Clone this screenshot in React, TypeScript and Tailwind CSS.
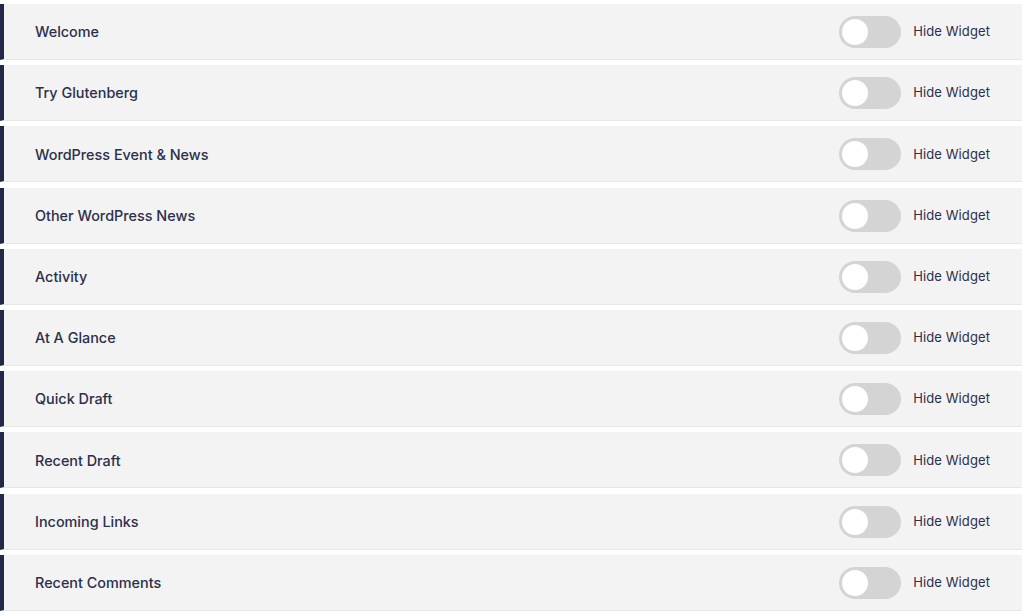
const widgets = [
  'Welcome',
  'Try Glutenberg',
  'WordPress Event & News',
  'Other WordPress News',
  'Activity',
  'At A Glance',
  'Quick Draft',
  'Recent Draft',
  'Incoming Links',
  'Recent Comments',
];

function Toggle() {
  return (
    <button type="button" className="relative h-[32px] w-[62px] rounded-full bg-[#d4d4d4] shrink-0">
      <span className="absolute left-[3px] top-[3px] h-[26px] w-[26px] rounded-full bg-white" />
    </button>
  );
}

export default function App() {
  return (
    <div className="min-h-[616px] bg-white pt-[4px] pr-[2px] font-['Inter','Liberation_Sans',sans-serif]">
      {widgets.map((name) => (
        <div
          key={name}
          className="mb-[5.2px] flex h-[56px] items-center border-b border-[#e6e6e6] border-l-[4px] border-l-[#232849] bg-[#f3f3f3] pl-[31px] pr-[32px] pt-[1px]"
        >
          <span className="flex-1 text-[14.4px] font-medium text-[#2b2f4c]">{name}</span>
          <div className="flex items-center gap-[12px]">
            <Toggle />
            <span className="text-[13px] tracking-[0.1px] text-[#2b2f4c]">Hide Widget</span>
          </div>
        </div>
      ))}
    </div>
  );
}
